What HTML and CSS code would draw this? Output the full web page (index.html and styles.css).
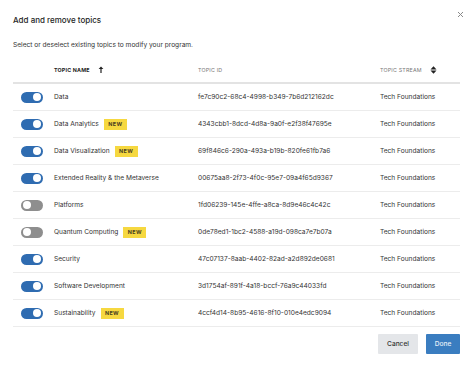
FILE: index.html
```html
<!DOCTYPE html>
<html lang="en">
<head>
    <meta charset="UTF-8">
    <meta name="viewport" content="width=device-width, initial-scale=1.0">
    <title>Add and remove topics</title>
    <link rel="stylesheet" href="styles.css">
</head>
<body>
    <div class="dialog">
        <div class="dialog-head">
            <h1>Add and remove topics</h1>
            <button class="close" aria-label="Close">
                <svg width="7" height="7" viewBox="0 0 7 7"><path d="M1 1L6 6M6 1L1 6" stroke="#8a8a8a" stroke-width="1"/></svg>
            </button>
        </div>
        <p class="subtitle">Select or deselect existing topics to modify your program.</p>

        <div class="topics">
            <div class="row head">
                <span></span>
                <span class="sorted">TOPIC NAME
                    <svg width="6" height="7" viewBox="0 0 6 7"><path d="M3 0.5L0.6 3H2.4V7H3.6V3H5.4Z" fill="#222"/></svg>
                </span>
                <span>TOPIC ID</span>
                <span>TOPIC STREAM
                    <svg class="both" width="7" height="8" viewBox="0 0 7 8"><path d="M3.5 0.3L6.5 3.4H0.5Z M3.5 7.7L6.5 4.6H0.5Z" fill="#222"/></svg>
                </span>
            </div>

            <div class="row">
                <span class="toggle on"></span>
                <span class="name">Data</span>
                <span>fe7c90c2-68c4-4998-b349-7b6d212162dc</span>
                <span>Tech Foundations</span>
            </div>
            <div class="row">
                <span class="toggle on"></span>
                <span class="name">Data Analytics <em class="new">NEW</em></span>
                <span>4343cbb1-8dcd-4d8a-9a0f-e2f38f47695e</span>
                <span>Tech Foundations</span>
            </div>
            <div class="row">
                <span class="toggle on"></span>
                <span class="name">Data Visualization <em class="new">NEW</em></span>
                <span>69f846c6-290a-493a-b19b-820fe61fb7a6</span>
                <span>Tech Foundations</span>
            </div>
            <div class="row">
                <span class="toggle on"></span>
                <span class="name">Extended Reality &amp; the Metaverse</span>
                <span>00675aa8-2f73-4f0c-95e7-09a4f65d9367</span>
                <span>Tech Foundations</span>
            </div>
            <div class="row">
                <span class="toggle"></span>
                <span class="name">Platforms</span>
                <span>1fd06239-145e-4ffe-a8ca-8d9e46c4c42c</span>
                <span>Tech Foundations</span>
            </div>
            <div class="row">
                <span class="toggle"></span>
                <span class="name">Quantum Computing <em class="new">NEW</em></span>
                <span>0de78ed1-1bc2-4588-a19d-098ca7e7b07a</span>
                <span>Tech Foundations</span>
            </div>
            <div class="row">
                <span class="toggle on"></span>
                <span class="name">Security</span>
                <span>47c07137-8aab-4402-82ad-a2d892de0681</span>
                <span>Tech Foundations</span>
            </div>
            <div class="row">
                <span class="toggle on"></span>
                <span class="name">Software Development</span>
                <span>3d1754af-891f-4a18-bccf-76a9c44033fd</span>
                <span>Tech Foundations</span>
            </div>
            <div class="row">
                <span class="toggle on"></span>
                <span class="name">Sustainability <em class="new">NEW</em></span>
                <span>4ccf4d14-8b95-4616-8f10-010e4edc9094</span>
                <span>Tech Foundations</span>
            </div>
        </div>

        <div class="actions">
            <button class="btn cancel">Cancel</button>
            <button class="btn done">Done</button>
        </div>
    </div>
</body>
</html>
```

FILE: styles.css
```css
* {
    margin: 0;
    padding: 0;
    box-sizing: border-box;
}

body {
    font-family: Inter, 'Liberation Sans', sans-serif;
    background: #fff;
    color: #2b2b2b;
}

.dialog {
    width: 474px;
    padding: 12px 14px 0 13px;
}

.dialog-head {
    display: flex;
    justify-content: space-between;
    align-items: flex-start;
}

h1 {
    font-size: 8px;
    font-weight: 500;
    line-height: 16px;
    color: #1e1e1e;
}

.close {
    border: none;
    background: none;
    margin: -4px -6px 0 0;
    width: 12px;
    height: 12px;
    display: flex;
    align-items: center;
    justify-content: center;
}

.subtitle {
    margin-top: 12px;
    font-size: 6.6px;
    line-height: 10px;
    color: #333;
}

.topics {
    margin-top: 9px;
}

.row {
    display: grid;
    grid-template-columns: 41px 144px 182px 1fr;
    align-items: center;
    height: 27px;
    border-bottom: 1px solid #ececec;
    font-size: 6.6px;
    color: #333;
}

.row.head {
    height: 25px;
    padding-bottom: 2px;
    border-bottom: 2px solid #e3e3e3;
    font-size: 5.3px;
    letter-spacing: 0.2px;
    color: #777;
}

.row.head span {
    display: flex;
    align-items: center;
    gap: 7px;
}

.row.head .sorted {
    font-weight: 700;
    color: #1e1e1e;
    gap: 8px;
}

.row.head .both {
    margin-left: 1px;
}

.toggle {
    position: relative;
    margin-left: 8px;
    width: 22px;
    height: 11px;
    border-radius: 6px;
    background: #8e8e8e;
}

.toggle::after {
    content: '';
    position: absolute;
    top: 1.5px;
    left: 2px;
    width: 8px;
    height: 8px;
    border-radius: 50%;
    background: #fff;
}

.toggle.on {
    background: #2f6cb1;
}

.toggle.on::after {
    left: 12px;
}

.name {
    display: flex;
    align-items: center;
    gap: 5px;
}

.new {
    font-style: normal;
    font-weight: 700;
    font-size: 5.4px;
    letter-spacing: 0.4px;
    background: #f6d840;
    color: #4a4020;
    width: 23px;
    height: 11px;
    display: flex;
    align-items: center;
    justify-content: center;
}

.actions {
    display: flex;
    justify-content: flex-end;
    gap: 8px;
    margin-top: 7px;
}

.btn {
    border: none;
    height: 20px;
    font-family: inherit;
    font-size: 6.6px;
    font-weight: 500;
    border-radius: 1px;
}

.cancel {
    width: 40px;
    background: #e4e6e9;
    color: #333;
}

.done {
    width: 34px;
    background: #3a7dc0;
    color: #e8f0f8;
}
```
